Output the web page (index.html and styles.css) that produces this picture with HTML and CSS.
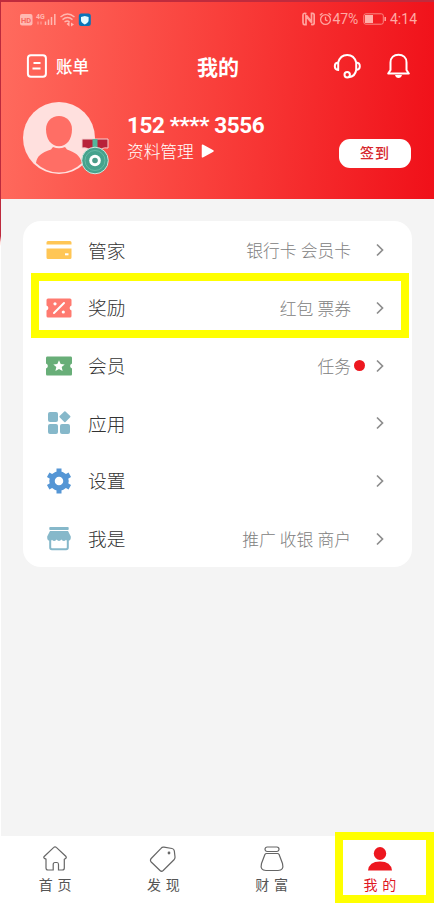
FILE: index.html
```html
<!DOCTYPE html>
<html lang="zh-CN">
<head>
<meta charset="utf-8">
<title>我的</title>
<link rel="stylesheet" href="styles.css">
</head>
<body>
<div class="screen">
  <header class="hero">
    <div class="status">
      <svg class="status-left" width="74" height="16" viewBox="0 0 74 16">
        <rect x="0" y="3" width="12.500" height="11.500" rx="2" fill="#ffb8b1"/>
        <text x="1" y="11.800" class="hd">HD</text>
        <text x="16" y="7.500" class="fourg">4G</text>
        <path d="M18 10.500v3M21 10.500v3" stroke="#ff9d95" stroke-width="1.200"/>
        <path d="M25.500 10.500V14M28.500 8.500V14M31.500 6V14M34.800 3V14" stroke="#ffb8b1" stroke-width="1.500"/>
        <g fill="none" stroke="#ffb8b1" stroke-width="1.400"><path d="M40.500 6Q47.500 0 54.500 6M42.500 8.600Q47.500 4.500 52.500 8.600M44.500 11Q47.500 9 49.500 11"/></g>
        <path d="M46.500 13l3-2.500v5zM51 15.500l3-2-3-2z" fill="#ffb8b1"/>
        <rect x="58.800" y="2.500" width="12" height="12.500" rx="2.500" fill="#0873b8"/>
        <path d="M61 6l3.800-1 3.800 1v3.500q0 2-3.800 4-3.800-2-3.800-4z" fill="#e5faff"/>
      </svg>
      <div class="status-right">
        <svg width="13" height="14" viewBox="0 0 13 14" fill="none" stroke="#ffa49f" stroke-width="1.700"><path d="M4.500 1.500L2.500 1.300Q1 1.300 1 3v7.500Q1 12.500 2.500 12.700H4V4l5.500 6V1.300H11q1.200.2 1.200 2v7.500q0 1.700-1.500 1.900L9 12.500"/><path d="M4 3.500l5.500 6.500" stroke-width="2.500"/></svg>
        <svg class="alarm" width="13" height="14" viewBox="0 0 13 14" fill="none" stroke="#ffa49f" stroke-width="1.300"><circle cx="6.500" cy="7.500" r="4.900"/><path d="M.8 3.300L3.500 1.200M12.200 3.300L9.500 1.200M6.500 4.800v3l2 1.200"/></svg>
        <span class="percent">47%</span>
        <svg class="battery" width="24" height="12" viewBox="0 0 24 12"><rect x=".8" y=".8" width="19.500" height="10.400" rx="2" fill="none" stroke="#f98984"/><rect x="2" y="2" width="8" height="8" fill="#ffb0aa"/><path d="M22.200 4v4" stroke="#ffa49f" stroke-width="1.500"/></svg>
        <span>4:14</span>
      </div>
    </div>
    <div class="nav">
      <div class="bill">
        <svg width="22" height="24" viewBox="0 0 22 24" fill="none" stroke="#fff" stroke-width="2"><rect x="1.900" y="1.200" width="18" height="21.500" rx="3"/><path d="M7.500 9h7M6.500 14.500h8" stroke-width="1.800"/></svg>
        <span>账单</span>
      </div>
      <h1>我的</h1>
      <div class="actions">
        <svg width="28" height="26" viewBox="0 0 28 26" fill="none" stroke="#fff" stroke-width="2" stroke-linejoin="round"><path d="M5.200 9.500C6.500 4.500 10 1.900 14.200 1.900S21.900 4.500 23.200 9.500M5.200 9.500C2.800 9.700 1.800 11 1.800 13.200S3 16.700 5.200 17zM23.200 9.500c2.400.2 3.600 1.500 3.600 3.700s-1.200 3.500-3.600 3.800zM23.200 17c-.6 4-3.200 6.800-7.500 7.300"/><circle cx="14.200" cy="21.700" r="2.700"/></svg>
        <svg width="23" height="26" viewBox="0 0 23 26" fill="none" stroke="#fff" stroke-width="2" stroke-linejoin="round"><path d="M3.500 17V9.500C3.500 4.500 7 1.700 11.500 1.700s8 2.800 8 7.800V17l2.300 3.500H1.200z"/><path d="M8 22h7q-.8 3-3.500 3T8 22z" fill="#fff" stroke="none"/></svg>
      </div>
    </div>
    <div class="profile">
      <div class="avatar">
        <svg width="72" height="72" viewBox="0 0 72 72"><circle cx="36" cy="36" r="36" fill="#ffe0de"/><path d="M36 14C43.500 14 49 19.500 49 27.500C49 37.500 43.500 44.300 36 44.300S23 37.500 23 27.500C23 19.500 28.500 14 36 14z" fill="#ff6e65"/><path d="M13 61C14 54 18 51 28 47.500L30 45Q36 47.500 42 45L44 47.500C53 51 56.500 53 59 61Q49 70.500 36 70.500T13 61z" fill="#ff6e65"/></svg>
        <svg class="medal" width="28" height="37" viewBox="0 0 28 37"><path d="M1 1h26v9q-7-1-9 4h-8Q8 9 1 10z" fill="#b8223a" stroke="#f4d1d1"/><path d="M11.500 1h5v9h-5z" fill="#54b59c"/><circle cx="14" cy="22.500" r="13.300" fill="#46a28d" stroke="#d1e6df"/><circle cx="14" cy="22.500" r="10" fill="none" stroke="#65b9a5"/><circle cx="14" cy="22.500" r="5.800" fill="#fff"/><circle cx="14" cy="22.500" r="2.800" fill="#4b9c89"/></svg>
      </div>
      <div class="identity">
        <div class="phone">152 **** 3556</div>
        <div class="manage"><span>资料管理</span><svg width="14" height="14" viewBox="0 0 14 14"><path d="M1.500 1.200L12 7 1.500 12.800z" fill="#fff" stroke="#fff" stroke-width="1.500" stroke-linejoin="round"/></svg></div>
      </div>
      <div class="checkin">签到</div>
    </div>
  </header>

  <main class="content">
    <div class="card">
      <div class="row">
        <svg class="icon" viewBox="0 0 28 28"><path d="M1.500 8.500v-2q0-1.500 1.500-1.500h22q1.500 0 1.500 1.500v2zM1.500 12.500h25v9q0 1.500-1.500 1.500H3q-1.500 0-1.500-1.500z" fill="#ffc655"/><path d="M20 18.300h3.500" stroke="#fff" stroke-width="2"/></svg>
        <span class="label">管家</span><span class="hint">银行卡 会员卡</span><svg class="chevron" viewBox="0 0 10 14"><path d="M2 1.500L7.500 7 2 12.500"/></svg>
      </div>
      <div class="row">
        <svg class="icon" viewBox="0 0 28 28"><path d="M3 4.500h22q1.500 0 1.500 1.500v5.500a2.600 2.600 0 0 0 0 5V22q0 1.500-1.500 1.500H3Q1.500 23.500 1.500 22v-5.500a2.600 2.600 0 0 0 0-5V6q0-1.500 1.500-1.500z" fill="#ff7a70"/><path d="M9 19L19 9" stroke="#fff" stroke-width="2" stroke-linecap="round"/><circle cx="10" cy="9.800" r="1.600" fill="#fff"/><circle cx="18.300" cy="18" r="1.600" fill="#fff"/></svg>
        <span class="label">奖励</span><span class="hint">红包 票券</span><svg class="chevron" viewBox="0 0 10 14"><path d="M2 1.500L7.500 7 2 12.500"/></svg>
        <div class="highlight"></div>
      </div>
      <div class="row">
        <svg class="icon" viewBox="0 0 28 28"><path d="M2 4.500h24q1 0 1 1.500v5.500a2.600 2.600 0 0 0 0 5V22q0 1.500-1 1.500H2Q1 23.500 1 22v-5.500a2.600 2.600 0 0 0 0-5V6q0-1.500 1-1.500z" fill="#68ae78"/><path d="M14 8.300l1.700 3.700 4 .4-3 2.700.9 4-3.600-2.100-3.600 2.100.9-4-3-2.700 4-.4z" fill="#fff"/></svg>
        <span class="label">会员</span><span class="hint dotted">任务</span><span class="dot"></span><svg class="chevron" viewBox="0 0 10 14"><path d="M2 1.500L7.500 7 2 12.500"/></svg>
      </div>
      <div class="row">
        <svg class="icon" viewBox="0 0 28 28" fill="#86b8ca"><rect x="3" y="3" width="10" height="10" rx="2"/><rect x="3" y="15" width="10" height="10" rx="2"/><rect x="15" y="15" width="10" height="10" rx="2"/><path d="M19.300 2.500q.6-.6 1.200 0l4.700 4.500q.6.600 0 1.200l-4.700 4.700q-.6.600-1.200 0l-4.700-4.700q-.6-.6 0-1.200z"/></svg>
        <span class="label">应用</span><span class="hint"></span><svg class="chevron" viewBox="0 0 10 14"><path d="M2 1.500L7.500 7 2 12.500"/></svg>
      </div>
      <div class="row">
        <svg class="icon" viewBox="0 0 28 28" fill="none" stroke="#5596d5"><path d="M14 1.500v25M3.200 7.750l21.600 12.500M24.800 7.750L3.200 20.250" stroke-width="5"/><circle cx="14" cy="14" r="7" stroke-width="5.500" fill="#fff"/></svg>
        <span class="label">设置</span><span class="hint"></span><svg class="chevron" viewBox="0 0 10 14"><path d="M2 1.500L7.500 7 2 12.500"/></svg>
      </div>
      <div class="row">
        <svg class="icon" viewBox="0 0 28 28"><path d="M5 2h18q.7 0 .7 1v1q0 1-.7 1H5q-.7 0-.7-1V3q0-1 .7-1zM5 6h18l2.800 5.500q.4 4.200-2.800 4.200-1.300 0-2-1-.9 1.300-2.300 1.300T16.300 14.600Q15.500 16 14 16t-2.300-1.400Q10.700 16 9.300 16T7 14.700q-.7 1-2 1-3.200 0-2.800-4.200z" fill="#86b8ca"/><path d="M5.200 15v7.500q0 1.700 1.700 1.700h14.200q1.700 0 1.700-1.700V15" fill="none" stroke="#86b8ca" stroke-width="2"/></svg>
        <span class="label">我是</span><span class="hint">推广 收银 商户</span><svg class="chevron" viewBox="0 0 10 14"><path d="M2 1.500L7.500 7 2 12.500"/></svg>
      </div>
    </div>
  </main>

  <nav class="tabs">
    <div class="tab">
      <svg viewBox="0 0 28 28"><path d="M14 1.800q.7 0 1.300.6L25 11.500q.8 1-.5 1.900l-1.200.8V23q0 2-2 2h-3.800v-5.500q0-2-1.500-2h-2q-1.800 0-1.800 2V25H7q-2 0-2-2v-8.800l-1.500-.8q-1.300-.9-.3-1.900l9.600-9.100q.6-.6 1.200-.6z"/></svg><span>首页</span>
    </div>
    <div class="tab">
      <svg viewBox="0 0 28 28"><path d="M15 2.200L23 3.500q2 .3 2.300 2.300l.7 6q.2 1.700-1 3L14.200 25.500q-1.700 1.500-3.200 0L2.200 17q-1.500-1.800 0-3.500L12 3.300q1.200-1.400 3-1.100z"/><circle cx="20" cy="8" r=".8" fill="#666"/></svg><span>发现</span>
    </div>
    <div class="tab">
      <svg viewBox="0 0 28 28"><rect x="7" y="2" width="14" height="4.500" rx="2.200"/><path d="M8.500 8.500h11q1 0 1.600 1l3.400 9q1.700 7-4.500 7H8q-6.200 0-4.500-7l3.400-9q.6-1 1.600-1z"/></svg><span>财富</span>
    </div>
    <div class="tab active">
      <svg viewBox="0 0 28 28"><ellipse cx="14" cy="8.500" rx="6.200" ry="6.500"/><path d="M2 25.500Q3 16.500 14 16.500T26 25.500z"/></svg><span>我的</span>
      <div class="highlight-tab"></div>
    </div>
  </nav>
</div>
</body>
</html>
```
FILE: styles.css
```css
* {
  box-sizing: border-box;
}

body {
  margin: 0;
  background: #fff;
  font-family: Roboto, "Noto Sans CJK SC", sans-serif;
}

svg {
  display: block;
  flex: none;
}

.screen {
  width: 434px;
  height: 903px;
  display: flex;
  flex-direction: column;
  overflow: hidden;
  padding-left: 1px;
  background: linear-gradient(#bd2a3d 0 236px, #ffdedb 242px, #fff 246px);
}

.hero {
  height: 199px;
  border-top: 2px solid #c02b3d;
  background: linear-gradient(94deg, #ff6b5e 0%, #f93f3b 49%, #f01019 100%);
  color: #fff;
}

.status {
  height: 34px;
  padding: 0 17px 0 19px;
  display: flex;
  align-items: center;
  justify-content: space-between;
}

.hd {
  font: bold 7.5px Roboto, sans-serif;
  fill: #f8665e;
}

.fourg {
  font: bold 7px Roboto, sans-serif;
  fill: #ffb8b1;
}

.status-right {
  display: flex;
  align-items: center;
  font-size: 14px;
  color: #ffa9a4;
}

.alarm {
  margin-left: 4px;
}

.percent {
  margin-left: 1px;
  letter-spacing: -0.2px;
}

.battery {
  margin: 0 3px 0 5px;
}

.nav {
  height: 60px;
  padding: 0 24px 0 25px;
  display: grid;
  grid-template-columns: 1fr auto 1fr;
  align-items: center;
}

.bill {
  display: flex;
  align-items: center;
  gap: 8px;
  font-size: 16.5px;
  font-weight: 500;
}

h1 {
  margin: 0;
  font-size: 21px;
  font-weight: 700;
}

.actions {
  display: flex;
  justify-content: flex-end;
  align-items: center;
  gap: 26px;
}

.profile {
  display: flex;
  height: 78px;
  margin-top: 4px;
  padding: 2px 23px 0 22px;
}

.avatar {
  position: relative;
  width: 72px;
  height: 72px;
}

.medal {
  position: absolute;
  left: 58px;
  top: 36px;
}

.identity {
  margin-left: 32px;
  padding-top: 10px;
}

.phone {
  font-size: 22.5px;
  line-height: 26px;
  font-weight: 700;
  letter-spacing: -0.4px;
  white-space: nowrap;
}

.manage {
  display: flex;
  align-items: center;
  gap: 7px;
  height: 25px;
  font-size: 16.7px;
  font-weight: 300;
}

.checkin {
  width: 72px;
  height: 29px;
  margin: 37px 0 0 auto;
  border-radius: 11px;
  background: #fff;
  color: #d6262b;
  font-size: 14px;
  font-weight: 500;
  line-height: 29px;
  letter-spacing: 1px;
  text-align: center;
}

.content {
  flex: 1;
  padding: 22px 22px 0;
  background: #f4f4f4;
}

.card {
  height: 346px;
  display: grid;
  grid-template-rows: repeat(6, 1fr);
  border-radius: 18px;
  background: #fff;
}

.row {
  position: relative;
  display: flex;
  align-items: center;
  padding: 1px 27px 0 22px;
}

.icon {
  width: 28px;
  height: 28px;
}

.label {
  margin-left: 15px;
  margin-bottom: 2px;
  font-size: 18.7px;
  font-weight: 300;
  color: #333;
}

.hint {
  margin-left: auto;
  margin-right: 24px;
  font-size: 16.8px;
  font-weight: 300;
  color: #808080;
}

.hint.dotted {
  margin-right: 3px;
}

.dot {
  width: 11px;
  height: 11px;
  margin-right: 10px;
  border-radius: 50%;
  background: #ed171f;
}

.chevron {
  width: 10px;
  height: 14px;
  fill: none;
  stroke: #8d8d8d;
  stroke-width: 1.7;
}

.highlight {
  position: absolute;
  left: 8px;
  right: 3px;
  top: -6px;
  height: 65px;
  border: 8px solid #ff0;
}

.tabs {
  height: 67px;
  display: grid;
  grid-template-columns: repeat(4, 1fr);
  background: #fff;
}

.tab {
  position: relative;
  display: flex;
  flex-direction: column;
  align-items: center;
  padding-top: 9px;
  font-size: 14px;
  line-height: 20px;
  color: #555;
}

.tab svg {
  width: 28px;
  height: 28px;
  fill: none;
  stroke: #666;
  stroke-width: 1.2;
}

.tab span {
  margin-top: 2px;
  letter-spacing: 5px;
  margin-right: -5px;
}

.tab.active {
  color: #e0171f;
}

.tab.active svg {
  fill: #ed171f;
  stroke: none;
}

.highlight-tab {
  position: absolute;
  left: 9px;
  right: 0;
  top: -4px;
  bottom: 0;
  border: 8px solid #ff0;
}
```
